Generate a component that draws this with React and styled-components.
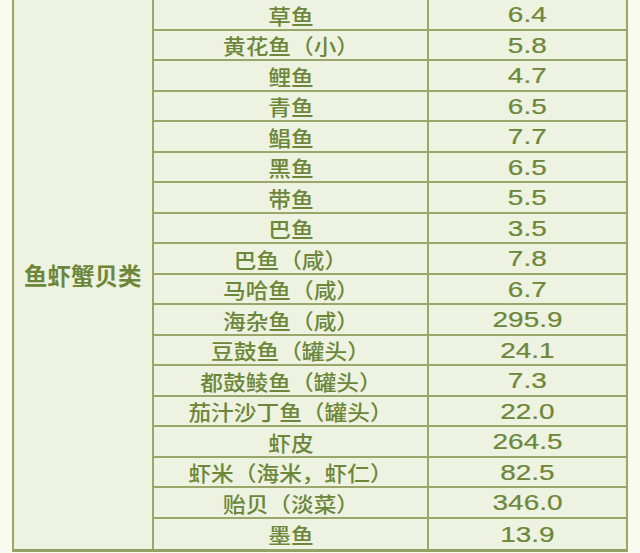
import React from 'react';
import styled, { createGlobalStyle } from 'styled-components';

const Global = createGlobalStyle`
  html, body { margin: 0; padding: 0; background: #f8fbee; }
  body { font-family: "Liberation Sans", "Noto Sans CJK SC", sans-serif; }
`;

const Page = styled.div`
  width: 640px;
  height: 553px;
  padding: 0 12px 0 12px;
  box-sizing: border-box;
  overflow: hidden;
`;

const Table = styled.div`
  display: grid;
  grid-template-columns: 140px 275px 1fr;
  grid-template-rows: repeat(18, 1fr);
  height: 552px;
  border: 2px solid #9aa66a;
  border-top: none;
  border-bottom: 3px solid #94a064;
  box-sizing: border-box;
  background: #eef2e0;
  color: #6c8739;
`;

const Category = styled.div`
  grid-row: 1 / span 18;
  display: flex;
  align-items: center;
  padding-left: 10px;
  border-right: 2px solid #9aa66a;
  font-family: "Noto Sans CJK SC", sans-serif;
  font-size: 23.5px;
  font-weight: 700;
`;

const Cell = styled.div`
  display: flex;
  align-items: center;
  justify-content: center;
  padding-top: 2px;
  box-sizing: border-box;
  border-bottom: ${p => (p.last ? 'none' : '2px solid #9aa66a')};
  border-right: ${p => (p.name ? '2px solid #9aa66a' : 'none')};
  line-height: 1;
  white-space: nowrap;
`;

const Name = styled.span`
  display: inline-block;
  font-family: "Noto Sans CJK SC", sans-serif;
  font-size: 21px;
  font-weight: 500;
  transform: scaleX(1.08);
`;

const Value = styled.span`
  display: inline-block;
  font-family: "Liberation Sans", sans-serif;
  font-size: 22px;
  transform: scaleX(1.27);
  -webkit-text-stroke: 0.2px currentColor;
`;

const rows = [
  ['草鱼', '6.4'],
  ['黄花鱼（小）', '5.8'],
  ['鲤鱼', '4.7'],
  ['青鱼', '6.5'],
  ['鲳鱼', '7.7'],
  ['黑鱼', '6.5'],
  ['带鱼', '5.5'],
  ['巴鱼', '3.5'],
  ['巴鱼（咸）', '7.8'],
  ['马哈鱼（咸）', '6.7'],
  ['海杂鱼（咸）', '295.9'],
  ['豆鼓鱼（罐头）', '24.1'],
  ['都鼓鲮鱼（罐头）', '7.3'],
  ['茄汁沙丁鱼（罐头）', '22.0'],
  ['虾皮', '264.5'],
  ['虾米（海米，虾仁）', '82.5'],
  ['贻贝（淡菜）', '346.0'],
  ['墨鱼', '13.9'],
];

export default function App() {
  return (
    <Page>
      <Global />
      <Table>
        <Category>鱼虾蟹贝类</Category>
        {rows.map(([name, val], i) => (
          <React.Fragment key={i}>
            <Cell name last={i === rows.length - 1}><Name>{name}</Name></Cell>
            <Cell last={i === rows.length - 1}><Value>{val}</Value></Cell>
          </React.Fragment>
        ))}
      </Table>
    </Page>
  );
}
